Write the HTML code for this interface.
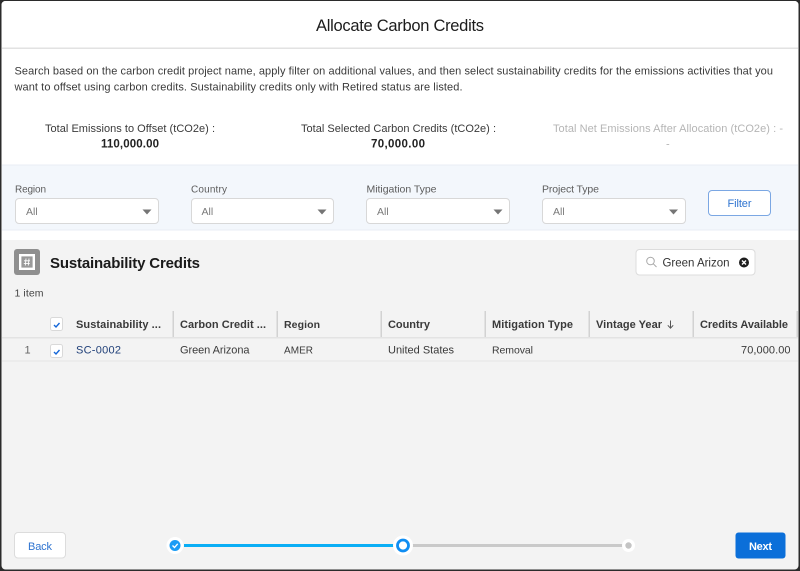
<!DOCTYPE html>
<html lang="en"><head><meta charset="utf-8"><title>Allocate Carbon Credits</title>
<style>
html,body{margin:0;padding:0;width:800px;height:571px;overflow:hidden;background:#2b2b2b}
svg{display:block;font-family:"Liberation Sans",Arial,sans-serif}
.t{font-size:11px;fill:#3a3a3a}
.h{font-size:11px;font-weight:bold;fill:#3a3a3a}
.l{font-size:10.5px;fill:#5c5c5c}
.a{font-size:10.5px;fill:#7a7a7a}
</style></head><body>
<svg width="800" height="571" viewBox="0 0 800 571" xmlns="http://www.w3.org/2000/svg">
<rect x="1.5" y="1" width="797" height="568.5" rx="4" fill="#f3f3f3"/>
<path d="M1.5 240V5a4 4 0 0 1 4-4h789a4 4 0 0 1 4 4v235z" fill="#fff"/>
<rect x="2" y="47.5" width="796" height="1.5" fill="#e2e2e2"/>
<text x="316" y="31" font-size="16.500" fill="#1c1c1c" textLength="168">Allocate Carbon Credits</text>
<text class="t" x="14.5" y="74.5" textLength="758.5">Search based on the carbon credit project name, apply filter on additional values, and then select sustainability credits for the emissions activities that you</text>
<text class="t" x="14.5" y="90.5" textLength="448">want to offset using carbon credits. Sustainability credits only with Retired status are listed.</text>
<text class="t" x="45" y="132" textLength="170">Total Emissions to Offset (tCO2e) :</text>
<text x="101" y="147.5" font-size="11.500" font-weight="bold" fill="#222" textLength="58">110,000.00</text>
<text class="t" x="301" y="132" textLength="195">Total Selected Carbon Credits (tCO2e) :</text>
<text x="371" y="147.5" font-size="11.500" font-weight="bold" fill="#222" textLength="54">70,000.00</text>
<text class="t" x="553" y="132" style="fill:#b5b5b5" textLength="230">Total Net Emissions After Allocation (tCO2e) : -</text>
<text class="t" x="666" y="147.5" style="fill:#b5b5b5">-</text>
<rect x="2" y="164.5" width="796" height="65.5" fill="#f3f7fc"/>
<rect x="2" y="164.5" width="796" height="1" fill="#e9eef4"/>
<rect x="2" y="229.5" width="796" height="1" fill="#e9eef4"/>
<text class="l" x="15" y="192.5" style="font-size:10px" textLength="31">Region</text>
<text class="l" x="191" y="192.5" style="font-size:10px" textLength="36">Country</text>
<text class="l" x="366.5" y="192.5" textLength="70">Mitigation Type</text>
<text class="l" x="542" y="192.5" textLength="57">Project Type</text>
<g fill="#fff" stroke="#d8d8d8"><rect x="15.5" y="198.5" width="143" height="25" rx="3.5"/><rect x="191.5" y="198.5" width="142" height="25" rx="3.5"/><rect x="366.5" y="198.5" width="143" height="25" rx="3.5"/><rect x="542.5" y="198.5" width="143" height="25" rx="3.5"/></g>
<text class="a" x="26" y="215">All</text><text class="a" x="201.5" y="215">All</text><text class="a" x="377" y="215">All</text><text class="a" x="553" y="215">All</text>
<g fill="#757575"><path d="M142.5 209.5h9l-4.5 5z"/><path d="M317.5 209.5h9l-4.5 5z"/><path d="M493.5 209.5h9l-4.5 5z"/><path d="M669 209.5h9l-4.5 5z"/></g>
<rect x="708.5" y="190.5" width="62" height="25" rx="3.5" fill="#fff" stroke="#7ba7e3"/>
<text x="727.5" y="207" font-size="11" fill="#2f74d0" textLength="24">Filter</text>
<rect x="14" y="249" width="26" height="26" rx="3" fill="#8f8f8f"/>
<rect x="20.200" y="255.200" width="13.600" height="13.600" fill="#9a9a9a" stroke="#fff" stroke-width="2.400"/>
<path d="M26 258.500l-.7 7M29 258.500l-.7 7M24 260.800h6M23.800 263.400h6" stroke="#fff" stroke-width=".9" fill="none"/>
<text x="50" y="268" font-size="15" font-weight="bold" fill="#1a1a1a" textLength="150">Sustainability Credits</text>
<rect x="636" y="249.500" width="119" height="25.500" rx="3.500" fill="#fff" stroke="#dcdcdc"/>
<circle cx="650.500" cy="261" r="3.800" fill="none" stroke="#a8a8a8" stroke-width="1"/><path d="M653.300 263.800l3.200 3.200" stroke="#a8a8a8" stroke-width="1"/>
<text x="662.500" y="266.500" font-size="11.500" fill="#333" textLength="67">Green Arizon</text>
<circle cx="744" cy="262.500" r="5" fill="#1d1d1d"/><path d="M742 260.500l4 4M746 260.500l-4 4" stroke="#fff" stroke-width="1.400"/>
<text x="14.500" y="296.500" font-size="10.500" fill="#444" textLength="29">1 item</text>
<rect x="2" y="337" width="796" height="1.500" fill="#e3e3e3"/>
<rect x="2" y="360.500" width="796" height="1" fill="#e6e6e6"/>
<g fill="#d2d2d2"><rect x="172.500" y="311" width="1.500" height="26"/><rect x="276.500" y="311" width="1.500" height="26"/><rect x="380.500" y="311" width="1.500" height="26"/><rect x="484.500" y="311" width="1.500" height="26"/><rect x="588.500" y="311" width="1.500" height="26"/><rect x="692.500" y="311" width="1.500" height="26"/><rect x="796.500" y="311" width="1.500" height="26"/></g>
<g fill="#fff" stroke="#d9d9d9"><rect x="50.500" y="317.500" width="12" height="13" rx="2"/><rect x="50.500" y="344.500" width="12" height="13" rx="2"/></g>
<g fill="none" stroke="#1466d8" stroke-width="1.400"><path d="M54 325l2 2 3.500-4"/><path d="M54 352l2 2 3.500-4"/></g>
<text class="h" x="76" y="328" textLength="85">Sustainability ...</text>
<text class="h" x="180" y="328" textLength="86">Carbon Credit ...</text>
<text class="h" x="284" y="328" style="font-size:10.500px" textLength="36">Region</text>
<text class="h" x="388" y="328" textLength="42">Country</text>
<text class="h" x="492" y="328" textLength="81">Mitigation Type</text>
<text class="h" x="596" y="328" textLength="66">Vintage Year</text>
<path d="M670.500 320.500v7.500M667.800 325.300l2.700 2.900 2.700-2.900" fill="none" stroke="#555" stroke-width="1"/>
<text class="h" x="700" y="328" textLength="88">Credits Available</text>
<text class="t" x="24.500" y="353.500" style="fill:#666">1</text>
<text class="t" x="76" y="353.500" style="fill:#1f3f78" textLength="45">SC-0002</text>
<text class="t" x="180" y="353.500" textLength="69.500">Green Arizona</text>
<text class="t" x="284" y="353.500" style="font-size:10px" textLength="29">AMER</text>
<text class="t" x="388" y="353.500" textLength="66">United States</text>
<text class="t" x="492" y="353.500" style="font-size:10.500px" textLength="41">Removal</text>
<text class="t" x="741" y="353.500" textLength="49.500">70,000.00</text>
<rect x="14.500" y="532.500" width="51" height="25.500" rx="3.500" fill="#fff" stroke="#dcdcdc"/>
<text x="28" y="550" font-size="11" fill="#2f74d0" textLength="24">Back</text>
<rect x="184" y="544" width="212" height="3" fill="#0aaef5"/>
<rect x="410" y="544" width="214" height="3" fill="#c9c9c9"/>
<circle cx="175" cy="545.500" r="8.500" fill="#fff"/><circle cx="175" cy="545.500" r="5.500" fill="#1a9cf5"/>
<path d="M172.500 545.500l2 2 3.200-3.700" fill="none" stroke="#fff" stroke-width="1.300"/>
<circle cx="403" cy="545.500" r="10" fill="#fff"/><circle cx="403" cy="545.500" r="5.500" fill="#fff" stroke="#0f8df2" stroke-width="2.800"/>
<circle cx="628.500" cy="545.500" r="6.500" fill="#fff"/><circle cx="628.500" cy="545.500" r="3.200" fill="#c4c4c4"/>
<rect x="735.500" y="532.500" width="50" height="26" rx="3" fill="#0b6fd9"/>
<text x="749" y="550" font-size="11" font-weight="bold" fill="#fff" textLength="23">Next</text>
</svg>
</body></html>
